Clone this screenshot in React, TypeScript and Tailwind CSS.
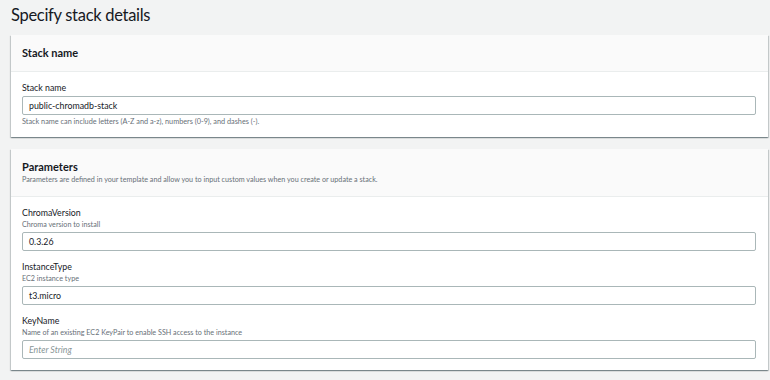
import React from "react";

const font = { fontFamily: "Lato, 'Open Sans', sans-serif" };

function Field({
  label,
  desc,
  value,
  placeholder,
}: {
  label: string;
  desc?: string;
  value?: string;
  placeholder?: string;
}) {
  return (
    <div className="flex flex-col">
      <div className="text-[8.8px] leading-[12px] text-[#16191f]">{label}</div>
      {desc && <div className="text-[7.2px] leading-[11px] text-[#687078]">{desc}</div>}
      <div className="mt-[2px] h-[19px] mr-[1px] flex items-center rounded-[2px] border border-[#aab7b8] bg-white px-[6px]">
        {value ? (
          <span className="text-[8.8px] text-[#16191f]">{value}</span>
        ) : (
          <span className="text-[8.8px] italic text-[#879596]">{placeholder}</span>
        )}
      </div>
    </div>
  );
}

const panelShadow =
  "bg-white shadow-[0_1px_1px_0_rgba(0,28,36,0.3),1px_1px_1px_0_rgba(0,28,36,0.15),-1px_1px_1px_0_rgba(0,28,36,0.15)]";

export default function App() {
  return (
    <div className="w-[770px] h-[380px] bg-[#f2f3f3] overflow-hidden" style={font}>
      <div className="pl-[11px] pr-[2px]">
        <h1 className="h-[35px] pt-[3px] text-[16.5px] leading-[24px] font-normal tracking-[-0.3px] text-[#16191f]">
          Specify stack details
        </h1>
        <section className={panelShadow}>
          <div className="h-[37px] flex items-center bg-[#fafafa] border-b border-[#eaeded] px-[11px]">
            <h2 className="text-[11px] font-bold text-[#16191f]">Stack name</h2>
          </div>
          <div className="px-[11px] pt-[10px] h-[65px]">
            <Field label="Stack name" value="public-chromadb-stack" />
            <div className="mt-[2px] text-[7.3px] leading-[10px] text-[#687078]">
              Stack name can include letters (A-Z and a-z), numbers (0-9), and dashes (-).
            </div>
          </div>
        </section>
        <section className={"mt-[12px] " + panelShadow}>
          <div className="h-[48px] flex flex-col justify-center bg-[#fafafa] border-b border-[#eaeded] px-[11px] pb-[2px]">
            <h2 className="text-[11px] leading-[15px] font-bold text-[#16191f]">Parameters</h2>
            <div className="text-[7.2px] leading-[11px] text-[#687078]">
              Parameters are defined in your template and allow you to input custom values when you create or update a stack.
            </div>
          </div>
          <div className="px-[11px] pt-[10px] pb-[11px] flex flex-col gap-[10px]">
            <Field label="ChromaVersion" desc="Chroma version to install" value="0.3.26" />
            <Field label="InstanceType" desc="EC2 instance type" value="t3.micro" />
            <Field
              label="KeyName"
              desc="Name of an existing EC2 KeyPair to enable SSH access to the instance"
              placeholder="Enter String"
            />
          </div>
        </section>
      </div>
    </div>
  );
}
